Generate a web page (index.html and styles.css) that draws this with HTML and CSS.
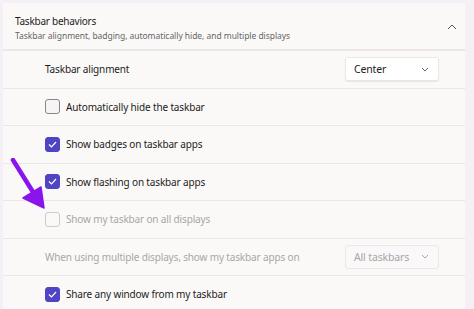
FILE: index.html
```html
<!DOCTYPE html>
<html lang="en">
<head>
    <meta charset="UTF-8">
    <title>Taskbar behaviors</title>
    <link rel="stylesheet" href="styles.css">
</head>
<body>
    <div class="panel">
        <div class="section-header">
            <div>
                <div class="section-title">Taskbar behaviors</div>
                <div class="section-sub">Taskbar alignment, badging, automatically hide, and multiple displays</div>
            </div>
            <svg class="chevron-up" width="10" height="6" viewBox="0 0 10 6"><path d="M1 5 L5 1 L9 5" fill="none" stroke="#555" stroke-width="1"/></svg>
        </div>

        <div class="row">
            <span class="label">Taskbar alignment</span>
            <div class="select">
                <span>Center</span>
                <svg width="8" height="5" viewBox="0 0 8 5"><path d="M1 1 L4 4 L7 1" fill="none" stroke="#666" stroke-width="1"/></svg>
            </div>
        </div>

        <div class="row">
            <span class="box"></span>
            <span class="label">Automatically hide the taskbar</span>
        </div>

        <div class="row">
            <span class="box checked"><svg width="9" height="7" viewBox="0 0 9 7"><path d="M1 3.5 L3.5 6 L8 1" fill="none" stroke="#fff" stroke-width="1.2"/></svg></span>
            <span class="label">Show badges on taskbar apps</span>
        </div>

        <div class="row">
            <span class="box checked"><svg width="9" height="7" viewBox="0 0 9 7"><path d="M1 3.5 L3.5 6 L8 1" fill="none" stroke="#fff" stroke-width="1.2"/></svg></span>
            <span class="label">Show flashing on taskbar apps</span>
        </div>

        <div class="row disabled">
            <span class="box"></span>
            <span class="label">Show my taskbar on all displays</span>
        </div>

        <div class="row disabled">
            <span class="label">When using multiple displays, show my taskbar apps on</span>
            <div class="select">
                <span>All taskbars</span>
                <svg width="8" height="5" viewBox="0 0 8 5"><path d="M1 1 L4 4 L7 1" fill="none" stroke="#aaa" stroke-width="1"/></svg>
            </div>
        </div>

        <div class="row">
            <span class="box checked"><svg width="9" height="7" viewBox="0 0 9 7"><path d="M1 3.5 L3.5 6 L8 1" fill="none" stroke="#fff" stroke-width="1.2"/></svg></span>
            <span class="label">Share any window from my taskbar</span>
        </div>
    </div>

    <!-- annotation arrow pointing at the disabled option -->
    <svg class="arrow" width="60" height="60" viewBox="0 0 60 60">
        <path d="M13 2 L33 34" stroke="#8a14ec" stroke-width="4.5" stroke-linecap="round"/>
        <path d="M23 40 L41 29 L44 50 Z" fill="#8a14ec" stroke="#8a14ec" stroke-width="1.5" stroke-linejoin="round"/>
    </svg>
</body>
</html>
```

FILE: styles.css
```css
* {
    margin: 0;
    padding: 0;
    box-sizing: border-box;
    font-family: 'Segoe UI', 'Noto Sans', sans-serif;
}

body {
    background: #f7eff6;
    color: #1c1c1c;
    padding: 3px 9px 0 3px;
    height: 309px;
    overflow: hidden;
}

.panel {
    display: flex;
    flex-direction: column;
    gap: 1px;
    background: #ebe7e7;
}

.section-header {
    height: 46px;
    background: #fbf9f8;
    display: flex;
    align-items: center;
    justify-content: space-between;
    padding: 2px 8px 0 12px;
    margin-bottom: 1px;
}

.section-title {
    font-size: 10px;
    letter-spacing: -0.25px;
    color: #1c1c1c;
}

.section-sub {
    font-size: 8.5px;
    letter-spacing: -0.05px;
    color: #666;
    margin-top: 2px;
}

.chevron-up {
    display: block;
}

.row {
    height: 36.5px;
    background: #fbf9f8;
    display: flex;
    align-items: center;
    gap: 6px;
    padding: 0 26px 0 42px;
    font-size: 10px;
    letter-spacing: -0.15px;
}

.row .select {
    margin-left: auto;
}

.select {
    width: 94px;
    height: 24px;
    background: #fff;
    border: 1px solid #ebe7e7;
    border-radius: 3px;
    box-shadow: 0 1px 1px rgba(0, 0, 0, 0.08);
    display: flex;
    align-items: center;
    justify-content: space-between;
    padding: 0 9px 0 8px;
    font-size: 10.5px;
}

.box {
    width: 15px;
    height: 15px;
    border: 1px solid #8a8686;
    border-radius: 3px;
    background: #f6f4f4;
    display: flex;
    align-items: center;
    justify-content: center;
    flex-shrink: 0;
}

.box.checked {
    background: #4f44c4;
    border-color: #4f44c4;
}

.disabled {
    color: #a8a6a6;
}

.disabled .box {
    border-color: #cfcbcb;
    background: #fbf9f8;
}

.disabled .select {
    background: #faf8f8;
    box-shadow: none;
}

.arrow {
    position: absolute;
    left: 0;
    top: 158px;
}
```
